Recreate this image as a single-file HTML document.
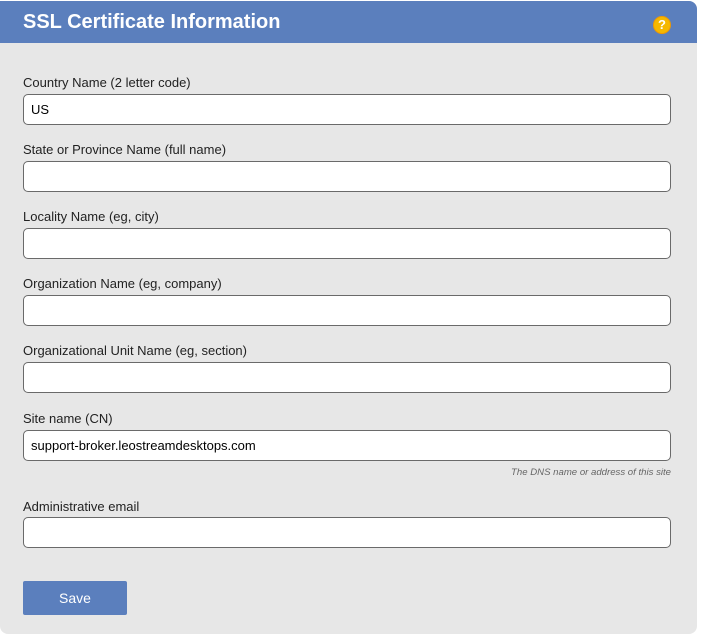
<!DOCTYPE html>
<html><head><style>
body{margin:0;background:#fff;width:705px;height:635px;overflow:hidden;font-family:"Liberation Sans",Arial,sans-serif}
.panel{position:absolute;left:0;top:1px;width:697px;height:633px;background:#e7e7e7;border-radius:0 8px 8px 8px;overflow:hidden}
.hdr{height:42px;background:#5b7fbd;color:#fff;font-weight:bold;font-size:20px;line-height:42px;padding-left:23px}
.help{position:absolute;left:653px;top:15px;width:16px;height:16px;border-radius:50%;background:#f5b800;border:1.5px solid #f09a00;color:#fff;font-size:13px;font-weight:bold;text-align:center;line-height:16px;box-sizing:content-box}
label{position:absolute;left:23px;font-size:13px;color:#222}
.in{position:absolute;left:23px;height:29px;background:#fff;border:1px solid #6a6a6a;border-radius:5px;font-size:13px;line-height:29px;padding-left:7px;box-sizing:content-box;width:639px}
.hint{position:absolute;right:34px;top:467px;font-size:9.6px;font-style:italic;color:#666}
.btn{position:absolute;left:23px;top:581px;width:104px;height:34px;background:#5b7fbd;border-radius:2px;color:#fff;font-size:14px;text-align:center;line-height:34px}
</style></head><body>
<div class="panel">
<div class="hdr">SSL Certificate Information</div>
<div class="help">?</div>
</div>
<label style="top:75px">Country Name (2 letter code)</label>
<div class="in" style="top:94px">US</div>
<label style="top:142px">State or Province Name (full name)</label>
<div class="in" style="top:161px"></div>
<label style="top:209px">Locality Name (eg, city)</label>
<div class="in" style="top:228px"></div>
<label style="top:276px">Organization Name (eg, company)</label>
<div class="in" style="top:295px"></div>
<label style="top:343px">Organizational Unit Name (eg, section)</label>
<div class="in" style="top:362px"></div>
<label style="top:411px">Site name (CN)</label>
<div class="in" style="top:430px">support-broker.leostreamdesktops.com</div>
<div class="hint">The DNS name or address of this site</div>
<label style="top:499px">Administrative email</label>
<div class="in" style="top:517px"></div>
<div class="btn">Save</div>
</body></html>
